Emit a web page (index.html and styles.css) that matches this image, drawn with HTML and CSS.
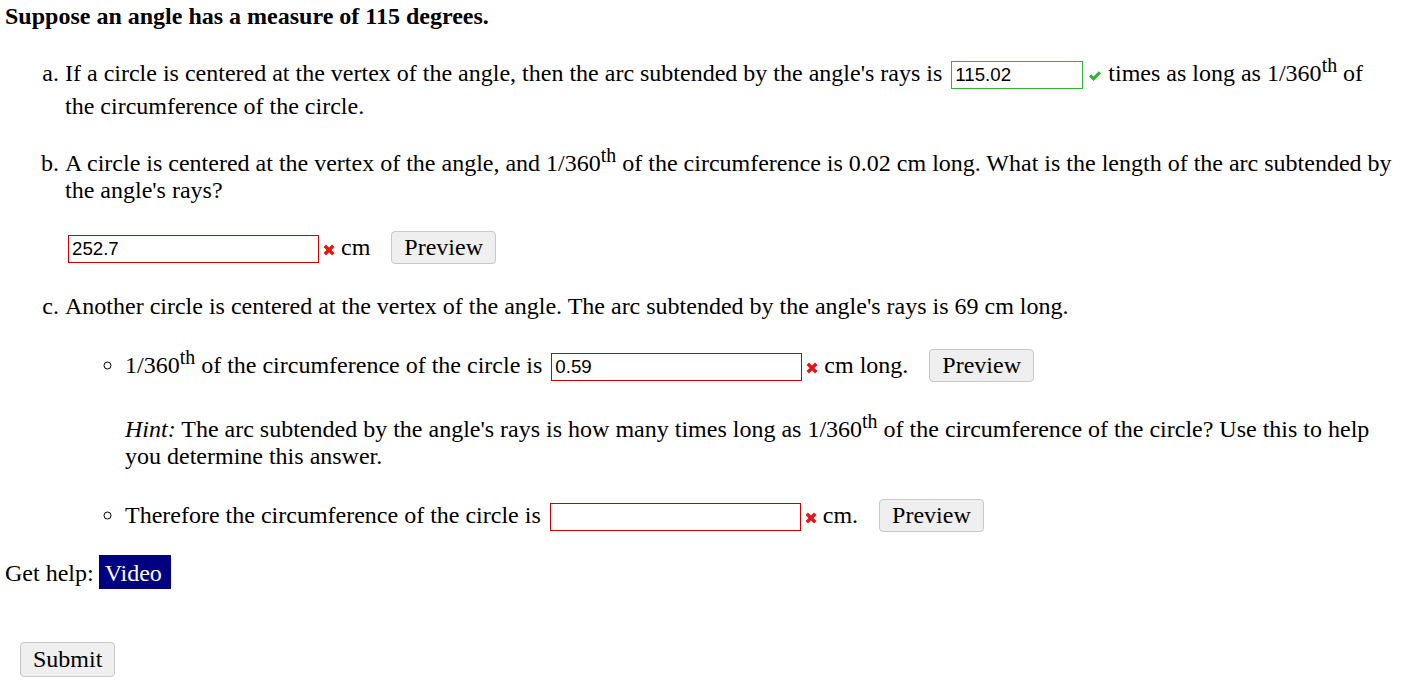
FILE: index.html
```html
<!DOCTYPE html>
<html>
<head>
<meta charset="utf-8">
<link rel="stylesheet" href="styles.css">
</head>
<body>
<p class="title"><b>Suppose an angle has a measure of 115 degrees.</b></p>
<ol class="parts">
  <li>
    <p>If a circle is centered at the vertex of the angle, then the arc subtended by the angle's rays is <input class="ans ans-ok ans-short" value="115.02"><svg class="mark" viewBox="0 0 14 12" width="14" height="12"><path d="M1 6.5 L3.2 4.3 L5.5 6.6 L10.8 1.3 L13 3.5 L5.5 11 Z" fill="#2fb52f"/></svg> times as long as 1/360<sup>th</sup> of the circumference of the circle.</p>
  </li>
  <li>
    <p>A circle is centered at the vertex of the angle, and 1/360<sup>th</sup> of the circumference is 0.02 cm long. What is the length of the arc subtended by the angle's rays?</p>
    <p class="row"><input class="ans ans-bad" value="252.7"><svg class="mark" viewBox="0 0 12 12" width="12" height="12"><path d="M0.5 3 L3 0.5 L6 3.5 L9 0.5 L11.5 3 L8.5 6 L11.5 9 L9 11.5 L6 8.5 L3 11.5 L0.5 9 L3.5 6 Z" fill="#e01818"/></svg> cm <button class="btn btn-preview">Preview</button></p>
  </li>
  <li>
    <p>Another circle is centered at the vertex of the angle. The arc subtended by the angle's rays is 69 cm long.</p>
    <ul class="sub">
      <li>
        <p>1/360<sup>th</sup> of the circumference of the circle is <input class="ans ans-bad" value="0.59"><svg class="mark" viewBox="0 0 12 12" width="12" height="12"><path d="M0.5 3 L3 0.5 L6 3.5 L9 0.5 L11.5 3 L8.5 6 L11.5 9 L9 11.5 L6 8.5 L3 11.5 L0.5 9 L3.5 6 Z" fill="#e01818"/></svg> cm long. <button class="btn btn-preview btn-first">Preview</button></p>
        <p class="hint"><i>Hint:</i> The arc subtended by the angle's rays is how many times long as 1/360<sup>th</sup> of the circumference of the circle? Use this to help you determine this answer.</p>
      </li>
      <li>
        <p class="last">Therefore the circumference of the circle is <input class="ans ans-bad" value=""><svg class="mark" viewBox="0 0 12 12" width="12" height="12"><path d="M0.5 3 L3 0.5 L6 3.5 L9 0.5 L11.5 3 L8.5 6 L11.5 9 L9 11.5 L6 8.5 L3 11.5 L0.5 9 L3.5 6 Z" fill="#e01818"/></svg> cm. <button class="btn btn-preview btn-last">Preview</button></p>
      </li>
    </ul>
  </li>
</ol>
<p class="help">Get help: <span class="video">Video</span></p>
<p class="submit-row"><button class="btn btn-submit">Submit</button></p>
</body>
</html>
```

FILE: styles.css
```css
html, body {
  background: #fff;
}
body {
  margin: 0;
  padding: 3px 12px 0 5px;
  font-family: "Liberation Serif", "Times New Roman", serif;
  font-size: 24px;
  color: #000;
}
p {
  margin: 24px 0;
}
.title {
  margin-top: 0;
}
.parts {
  list-style-type: lower-alpha;
  padding-left: 60px;
  margin: 24px 0 0;
}
.sub {
  list-style-type: circle;
  padding-left: 60px;
  margin: 24px 0 0;
}
.last {
  margin-bottom: 20px;
}
sup {
  font-size: 0.83em;
}
.ans {
  font-family: "Liberation Sans", Arial, sans-serif;
  font-size: 18.7px;
  height: 28px;
  box-sizing: border-box;
  width: 251px;
  padding: 0 3px;
  margin: 3px 4px 4px 3px;
  border: 1px solid #c00;
  background: #fff;
  color: #000;
  outline: none;
}
.ans-ok {
  border-color: #2fb52f;
}
.ans-short {
  width: 132px;
  margin-right: 5px;
}
.mark {
  vertical-align: -1px;
}
.btn {
  font-family: "Liberation Serif", "Times New Roman", serif;
  font-size: 24px;
  background: #efefef;
  border: 1px solid #c8c8c8;
  border-radius: 4px;
  color: #000;
  padding: 2px 12px;
  margin: 3px 0 5px 15px;
}
.btn-first {
  margin-top: 5px;
  margin-bottom: 4px;
}
.btn-last {
  margin-top: 5px;
  margin-bottom: 1px;
}
.btn-submit {
  margin: 0 0 0 15px;
  padding: 3px 12px;
}
.video {
  display: inline-block;
  background: #000080;
  color: #fff;
  padding: 5px 9px 2px 6px;
  margin: 0 0 2px -1px;
}
.help {
  margin-top: 20px;
}
.submit-row {
  margin-top: 51px;
}
```
